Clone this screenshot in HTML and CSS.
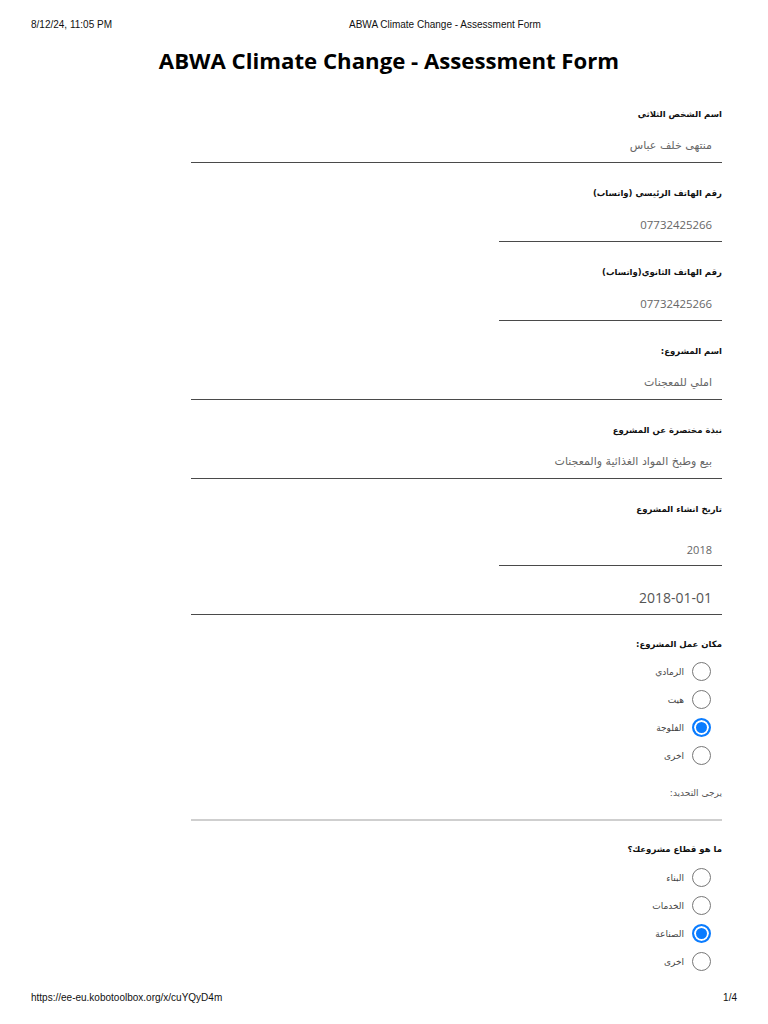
FILE: index.html
```html
<!DOCTYPE html>
<html lang="en">
<head>
    <meta charset="UTF-8">
    <meta name="viewport" content="width=device-width, initial-scale=1.0">
    <title>ABWA Climate Change - Assessment Form</title>
    <link rel="stylesheet" href="styles.css">
</head>
<body>
    <div class="printHeader">
        <span class="printDate">8/12/24, 11:05 PM</span>
        <span class="printTitle">ABWA Climate Change - Assessment Form</span>
    </div>

    <h1 class="formTitle">ABWA Climate Change - Assessment Form</h1>

    <div class="form" dir="rtl">
        <div class="field">
            <div class="label">اسم الشخص الثلاثي</div>
            <div class="answer textAnswer full">منتهى خلف عباس</div>
        </div>

        <div class="field">
            <div class="label">رقم الهاتف الرئيسي (واتساب)</div>
            <div class="answer numAnswer short">07732425266</div>
        </div>

        <div class="field">
            <div class="label">رقم الهاتف الثانوي(واتساب)</div>
            <div class="answer numAnswer short">07732425266</div>
        </div>

        <div class="field">
            <div class="label">اسم المشروع:</div>
            <div class="answer textAnswer full">املي للمعجنات</div>
        </div>

        <div class="field">
            <div class="label">نبذة مختصرة عن المشروع</div>
            <div class="answer textAnswer full">بيع وطبخ المواد الغذائية والمعجنات</div>
        </div>

        <div class="field">
            <div class="label">تاريخ انشاء المشروع</div>
            <div class="answer yearAnswer short">2018</div>
            <div class="answer dateAnswer full">2018-01-01</div>
        </div>

        <div class="field choiceField">
            <div class="label">مكان عمل المشروع:</div>
            <div class="choices">
                <div class="choice"><span class="radio"></span><span>الرمادي</span></div>
                <div class="choice"><span class="radio"></span><span>هيت</span></div>
                <div class="choice"><span class="radio checked"></span><span>الفلوجة</span></div>
                <div class="choice"><span class="radio"></span><span>اخرى</span></div>
            </div>
            <div class="specify">يرجى التحديد:</div>
            <div class="specifyLine"></div>
        </div>

        <div class="field choiceField sectorField">
            <div class="label">ما هو قطاع مشروعك؟</div>
            <div class="choices">
                <div class="choice"><span class="radio"></span><span>البناء</span></div>
                <div class="choice"><span class="radio"></span><span>الخدمات</span></div>
                <div class="choice"><span class="radio checked"></span><span>الصناعة</span></div>
                <div class="choice"><span class="radio"></span><span>اخرى</span></div>
            </div>
        </div>
    </div>

    <div class="printFooter">
        <span>https://ee-eu.kobotoolbox.org/x/cuYQyD4m</span>
        <span>1/4</span>
    </div>
</body>
</html>
```

FILE: styles.css
```css
body {
    margin: 0;
    width: 768px;
    height: 1024px;
    position: relative;
    background: #fff;
    color: #222;
    font-family: "Liberation Sans", Arial, sans-serif;
}
.printHeader {
    display: flex;
    padding: 19px 0 0 31px;
    font-size: 10px;
    line-height: 12px;
    color: #111;
}
.printTitle {
    margin-left: 237px;
}
.formTitle {
    margin: 0;
    padding-top: 15px;
    padding-left: 10px;
    text-align: center;
    font-family: "Open Sans", sans-serif;
    font-size: 22.2px;
    font-weight: 700;
    line-height: 30px;
    color: #000;
}
.form {
    width: 531px;
    margin-left: 191px;
}
.field {
    padding-top: 23px;
}
.field:first-child {
    padding-top: 31px;
}
.label {
    font-family: "DejaVu Sans", sans-serif;
    font-size: 8.5px;
    font-weight: 700;
    line-height: 14px;
    color: #111;
}
.answer {
    padding-right: 10px;
    border-bottom: 1.5px solid #4a4a4a;
    color: #666;
}
.short {
    width: 213px;
}
.textAnswer {
    margin-top: 15px;
    padding-bottom: 6px;
    font-family: "DejaVu Sans", sans-serif;
    font-size: 11px;
    line-height: 20px;
}
.numAnswer {
    margin-top: 15px;
    padding-bottom: 6px;
    font-family: "Open Sans", sans-serif;
    font-size: 11.4px;
    line-height: 20px;
}
.yearAnswer {
    margin-top: 26px;
    padding-bottom: 7px;
    font-family: "Open Sans", sans-serif;
    font-size: 11px;
    line-height: 16px;
}
.dateAnswer {
    margin-top: 22px;
    padding-bottom: 6px;
    font-family: "Open Sans", sans-serif;
    font-size: 14px;
    line-height: 20px;
    color: #555;
}
.choiceField {
    padding-top: 22px;
}
.sectorField {
    padding-top: 21px;
}
.choices {
    display: flex;
    flex-direction: column;
    gap: 9px;
    margin-top: 11px;
    padding-right: 11px;
}
.sectorField .choices {
    margin-top: 12px;
}
.choice {
    display: flex;
    align-items: center;
    gap: 8px;
    font-family: "DejaVu Sans", sans-serif;
    font-size: 9px;
    color: #444;
}
.radio {
    width: 17px;
    height: 17px;
    border: 1px solid #777;
    border-radius: 50%;
    box-sizing: content-box;
    flex-shrink: 0;
}
.radio.checked {
    border: 2px solid #0a7cff;
    width: 15px;
    height: 15px;
    background: #0a7cff;
    box-shadow: inset 0 0 0 2px #fff;
}
.specify {
    margin-top: 21px;
    font-family: "DejaVu Sans", sans-serif;
    font-size: 9px;
    line-height: 14px;
    color: #555;
}
.specifyLine {
    margin-top: 19px;
    height: 2px;
    background: #cfcfcf;
}
.printFooter {
    position: absolute;
    left: 31px;
    right: 31px;
    top: 992px;
    display: flex;
    justify-content: space-between;
    font-size: 10px;
    line-height: 12px;
    color: #111;
}
```
